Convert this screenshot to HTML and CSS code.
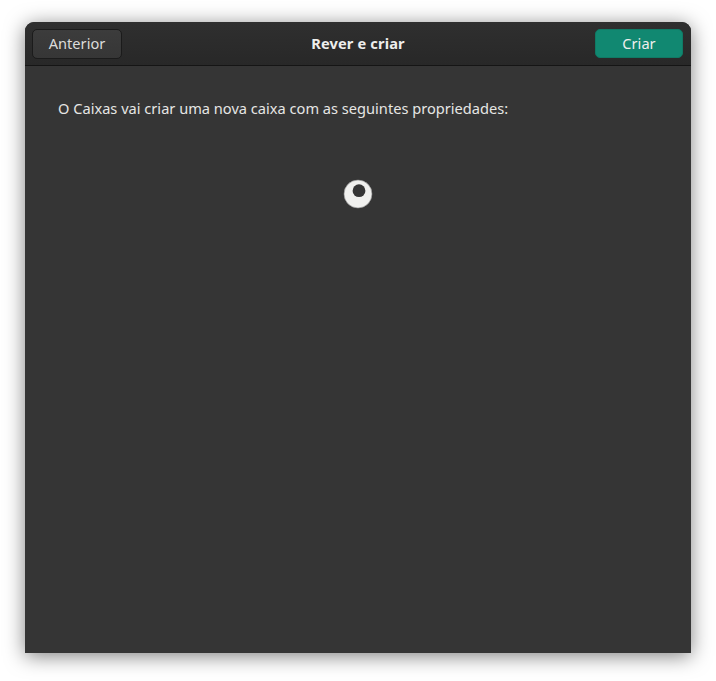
FILE: index.html
```html
<!DOCTYPE html>
<html lang="pt">
<head>
    <meta charset="UTF-8">
    <title>Rever e criar</title>
    <link rel="stylesheet" href="styles.css">
</head>
<body>
    <div class="window">
        <header class="headerbar">
            <button class="btn">Anterior</button>
            <div class="title">Rever e criar</div>
            <button class="btn btn-create">Criar</button>
        </header>
        <main class="content">
            <p class="intro">O Caixas vai criar uma nova caixa com as seguintes propriedades:</p>
            <div class="thumb">
                <svg width="30" height="30" viewBox="0 0 30 30">
                    <circle cx="15" cy="15" r="14" fill="#f0f0ee" stroke="#8a8a89" stroke-width="0.6"/>
                    <circle cx="16" cy="11.7" r="6.4" fill="#353535"/>
                </svg>
            </div>
        </main>
    </div>
</body>
</html>
```

FILE: styles.css
```css
/* Page */
html, body {
    margin: 0;
    height: 100%;
}

body {
    background: #ffffff;
    font-family: "Noto Sans", sans-serif;
    font-size: 14.62px;
    color: #e6e6e4;
    padding: 22px 25px 28px 25px;
    box-sizing: border-box;
    overflow: hidden;
}

/* Window */
.window {
    height: 631px;
    display: flex;
    flex-direction: column;
    background: #353535;
    border-radius: 9px 9px 0 0;
    box-shadow: 0 3px 20px rgba(0, 0, 0, 0.5);
    overflow: hidden;
}

/* Header */
.headerbar {
    height: 43px;
    display: flex;
    align-items: center;
    justify-content: space-between;
    padding: 0 8px 0 7px;
    background: linear-gradient(to bottom, #2f2f2f, #282828);
    border-bottom: 1px solid #151515;
    flex-shrink: 0;
}

.title {
    font-weight: 700;
    letter-spacing: 0.15px;
    color: #eeeeec;
    margin: -1px 1px 0 0;
}

.btn {
    width: 90px;
    height: 30px;
    border: 1px solid #1b1b1b;
    border-radius: 5px;
    background: linear-gradient(to bottom, #3c3c3c, #363636);
    color: #dcdcda;
    font-family: inherit;
    font-size: inherit;
    padding: 0 0 2px;
}

.btn-create {
    width: 88px;
    height: 29px;
    border-color: #107a65;
    background: #118871;
    color: #eeeeec;
}

/* Content */
.content {
    flex: 1;
    padding: 32px 33px;
}

.intro {
    margin: 0;
    line-height: 20px;
}

.thumb {
    display: flex;
    justify-content: center;
    margin-top: 61px;
}
```
